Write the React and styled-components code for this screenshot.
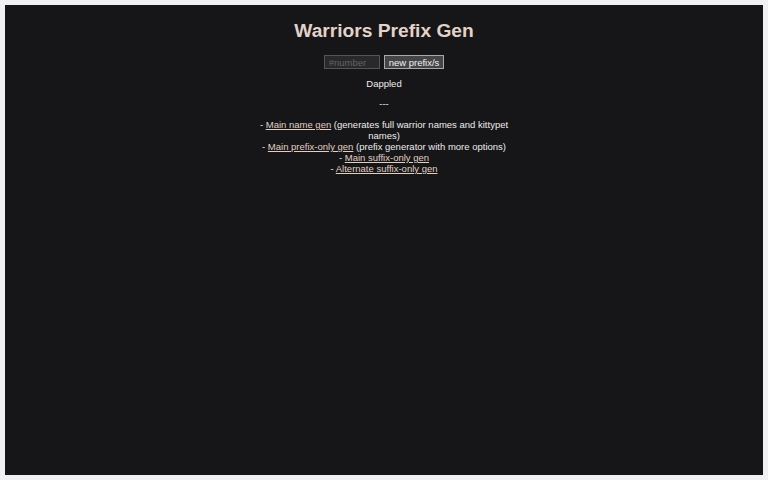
import React from 'react';
import styled, { createGlobalStyle } from 'styled-components';

const GlobalStyle = createGlobalStyle`
  body {
    margin: 5px;
    background: #f1f1f3;
    font-family: "Liberation Sans", Arial, sans-serif;
  }
`;

const Page = styled.div`
  background: #161618;
  min-height: 470px;
  color: #ececec;
  display: flex;
  flex-direction: column;
  align-items: center;
  font-size: 9.5px;
`;

const Title = styled.h1`
  margin: 14px 0 0;
  font-size: 19.2px;
  font-weight: bold;
  color: #e3d3c8;
  line-height: 24px;
`;

const Form = styled.div`
  display: flex;
  gap: 4px;
  margin-top: 12px;
`;

const NumberInput = styled.input`
  width: 56px;
  height: 14px;
  box-sizing: border-box;
  background: #29292b;
  border: 1px solid #545456;
  color: #ddd;
  font: 9.5px "Liberation Sans", Arial, sans-serif;
  padding: 0 4px;

  &::placeholder {
    color: #626264;
  }
`;

const Button = styled.button`
  height: 14px;
  box-sizing: border-box;
  background: #454547;
  border: 1px solid #a8a8aa;
  color: #f0f0f0;
  font: 9.5px "Liberation Sans", Arial, sans-serif;
  padding: 0 4px;
  line-height: 11px;
`;

const Result = styled.p`
  margin: 9px 0 0;
  line-height: 12px;
`;

const Divider = styled.p`
  margin: 8px 0 0;
  line-height: 12px;
`;

const Links = styled.div`
  margin-top: 9px;
  width: 256px;
  text-align: center;
  line-height: 11px;
`;

const Link = styled.a`
  color: #e0cfc2;
  text-decoration: underline;
`;

export default function App() {
  return (
    <>
      <GlobalStyle />
      <Page>
        <Title>Warriors Prefix Gen</Title>
        <Form>
          <NumberInput placeholder="#number" />
          <Button>new prefix/s</Button>
        </Form>
        <Result>Dappled</Result>
        <Divider>---</Divider>
        <Links>
          - <Link href="#">Main name gen</Link> (generates full warrior names and kittypet names)
          <br />
          - <Link href="#">Main prefix-only gen</Link> (prefix generator with more options)
          <br />
          - <Link href="#">Main suffix-only gen</Link>
          <br />
          - <Link href="#">Alternate suffix-only gen</Link>
        </Links>
      </Page>
    </>
  );
}
